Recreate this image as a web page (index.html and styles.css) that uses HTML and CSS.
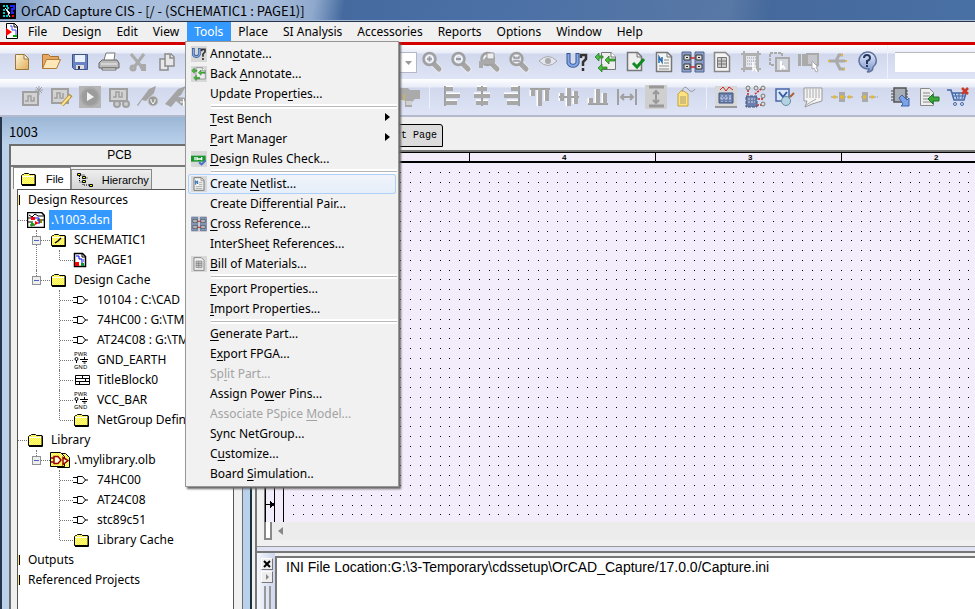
FILE: index.html
```html
<!DOCTYPE html>
<html lang="en">
<head>
  <meta charset="UTF-8" />
  <title>OrCAD Capture CIS</title>
  <meta name="viewport" content="width=device-width, initial-scale=1.0" />
  <link rel="stylesheet" href="styles.css">
</head>
<body>
  <!-- shared icons -->
  <svg class="sprite" width="0" height="0" aria-hidden="true">
    <pattern id="dither" width="2" height="2" patternUnits="userSpaceOnUse"><rect width="2" height="2" fill="#ffff9c"/><path d="M0 0h1v1H0zM1 1h1v1H1z" fill="#fff02a"/></pattern>
    <linearGradient id="blue" x2="0" y2="1"><stop stop-color="#e3ebfb"/><stop offset="1" stop-color="#7e98cc"/></linearGradient>
    <linearGradient id="paper" x2="1" y2="1"><stop stop-color="#fff5d8"/><stop offset="1" stop-color="#e0ad55"/></linearGradient>
    <symbol id="folder" viewBox="0 0 18 16"><path d="M1.500 13.500V4.500l1-1h1l1-1h4l1 1h5.500v10z" fill="url(#dither)" stroke="#000"/><path d="M2 5.500h12" stroke="#fff"/><path d="M15.500 4v10.500H2" fill="none" stroke="#000"/></symbol>
    <symbol id="gate" viewBox="0 0 18 16"><path d="M0 5.500h5M0 10.500h5M4.500 4.500h5l3 3.500-3 3.500h-5zM12 8h3" fill="none" stroke="#000"/></symbol>
    <symbol id="pwr" viewBox="0 0 18 18"><text x="1" y="5" font-size="6">PWR</text><path d="M3.500 9v3M7 8.500h8M11.500 6v2M9 10.500h5M10.500 12h2" fill="none" stroke="#000"/><circle cx="3.500" cy="8" r="1.500" fill="none" stroke="#000"/><text x="1" y="18" font-size="6">GND</text></symbol>
    <symbol id="page" viewBox="0 0 18 16"><path d="M1.500 1.500h8l3 3v10h-11z" fill="#fff" stroke="#000" stroke-width="1.500"/><path d="M9 1v4h4" fill="none" stroke="#000"/><path d="M3 4h3v3h3v4" fill="none" stroke="#00f"/><path d="M2 10h4v4H2z" fill="red"/><path d="M8 11h3v3H8z" fill="#093"/><path d="M9 7h2v3H9z" fill="#88f"/></symbol>
    <symbol id="zoom" viewBox="0 0 24 24"><path d="M13 13l6 6" stroke="#e8e8e8" stroke-width="7" stroke-linecap="round"/><path d="M13 13l6 6" stroke="#a5a5a5" stroke-width="5" stroke-linecap="round"/><circle cx="9.500" cy="9" r="6" fill="#d5daea" stroke="#a0a0a0" stroke-width="2.500"/><circle cx="9.500" cy="9" r="3.500" fill="none" stroke="#fff"/></symbol>
    <symbol id="annotate" viewBox="0 0 24 24"><path d="M3.500 3v10a5 5 0 0 0 9 0V3" fill="none" stroke="#36558f" stroke-width="4"/><path d="M3.500 4v9a5 5 0 0 0 9 0V4" fill="none" stroke="#83a9e8" stroke-width="2"/><path d="M16 8V5h5v4l-3 3v4M18 18v3" fill="none" stroke="#333" stroke-width="2.500"/></symbol>
    <symbol id="back" viewBox="0 0 24 24"><path d="M7.500 2.500h10l4 4v13h-14z" fill="#eee" stroke="#777"/><path d="M17 2v5h5" fill="#fff" stroke="#777"/><path d="M1 7l4-4v3h4v2H5v3zM11 10l4-4v3h6v2h-6v3zM4 18l4-4v3h5v2H8v3z" fill="#4dba3c" stroke="#18731a" stroke-width=".7"/></symbol>
    <symbol id="netlist" viewBox="0 0 24 24"><path d="M4.500 2.500h11l4 4v15h-15z" fill="#f4f4f4" stroke="#777" stroke-width="1.500"/><path d="M15 3v4h4" fill="none" stroke="#777"/><path d="M7 13V7l3 5V7" fill="none" stroke="#246bb0" stroke-width="1.500"/><path d="M12 10h5M12 13h5M7 16h10M7 19h10" stroke="#888"/></symbol>
    <symbol id="cross" viewBox="0 0 24 24"><path d="M1 2h9v20H1zM14 2h9v20h-9z" fill="#8b9fc9" stroke="#53658d"/><path d="M10 8h4M10 17h4" stroke="#d22" stroke-width="1.500"/><path d="M3 5h6v5H3zM15 5h6v5h-6zM3 14h6v5H3zM15 14h6v5h-6z" fill="#ddd" stroke="#333"/><path d="M5 7.500h2M17 7.500h2M5 16.500h2M17 16.500h2" stroke="#222"/></symbol>
    <symbol id="bom" viewBox="0 0 24 24"><path d="M4.500 2.500h11l4 4v15h-15z" fill="#f4f4f4" stroke="#888" stroke-width="1.500"/><path d="M7.500 7.500h9v10h-9zM7.500 11h9M7.500 14h9M11.500 8v9" fill="#ccc" stroke="#777"/></symbol>
  </svg>

  <header class="titlebar">
    <svg class="app-icon" width="16" height="16" viewBox="0 0 16 16"><path d="M0 0h16v16H0z"/><path d="M3 3h5v4H4v6h4" fill="none" stroke="#0cc" stroke-dasharray="2 1" stroke-width="2"/><path d="M5 5l5 5-2 1 2 3" fill="#fff" stroke="#fff"/><path d="M10 3h4v3h-2v4h2" fill="none" stroke="#22f" stroke-width="2"/><path d="M12 12h2v2h-2z" fill="red"/></svg>
    <h1>OrCAD Capture CIS - [/ - (SCHEMATIC1 : PAGE1)]</h1>
  </header>

  <nav class="menubar">
    <svg class="doc-icon" width="14" height="18" viewBox="0 0 14 18"><path d="M1.500 1.500h8l3 3v12h-11z" fill="#fff" stroke="#000"/><path d="M9 1v4h4" fill="none" stroke="#000"/><path d="M5 4h2v4h4v5" fill="none" stroke="#44f"/><path d="M1 6l6 4-6 4z" fill="red"/><path d="M8 14h4" stroke="#0a0" stroke-width="2"/></svg>
    <button>File</button><button>Design</button><button>Edit</button><button>View</button><button class="open">Tools</button><button>Place</button><button>SI Analysis</button><button>Accessories</button><button>Reports</button><button>Options</button><button>Window</button><button>Help</button>
  </nav>

  <div class="toolbar main-tools">
    <div class="group">
      <button aria-label="New"><svg viewBox="0 0 24 24"><path d="M5.500 4.500h9l4 4v11h-13z" fill="url(#paper)" stroke="#9b773b"/><path d="M14 5v4h4" fill="#fff" stroke="#9b773b"/></svg></button>
      <button aria-label="Open"><svg viewBox="0 0 24 24"><path d="M3.500 18.500v-14h6l2 2h8v4" fill="#e6a765" stroke="#a97132"/><path d="M3.500 18.500l4-9h14l-4 9z" fill="#ffe7b8" stroke="#b47b37"/></svg></button>
      <button aria-label="Save"><svg viewBox="0 0 24 24"><path d="M4.500 4.500h15v15h-13l-2-2z" fill="#6883c4" stroke="#405488"/><path d="M7 5h10v7H7z" fill="#e9effb"/><path d="M8 15h8v4H8z" fill="#ddd"/><path d="M10 16h2v3h-2z" fill="#334"/></svg></button>
      <button aria-label="Print"><svg viewBox="0 0 24 24"><path d="M7 10L9 3h9l-1 7" fill="#fff" stroke="#777"/><path d="M5 10h15l2 3v5H2v-5z" fill="#bbb" stroke="#666"/><path d="M4 14h16" stroke="#eee"/><path d="M5 18h14v2H5z" fill="#fff" stroke="#666"/></svg></button>
      <button aria-label="Cut"><svg viewBox="0 0 24 24" fill="none" stroke="#aaa"><path d="M5 4l10 12M18 4L9 16" stroke-width="3"/><circle cx="7" cy="18" r="2" stroke-width="3"/><path d="M14 15h5v5h-3z" fill="#aaa" stroke-width="2"/></svg></button>
      <button aria-label="Copy"><svg viewBox="0 0 24 24" fill="#e8e8ea" stroke="#8c8c8c" stroke-width="1.500"><path d="M5 9h8v11H5z"/><path d="M10 4h6l3 3v9h-9z"/><path d="M15 4v4h4"/></svg></button>
    </div>
    <div class="combo">
      <select aria-label="Place part"><option></option></select>
      <svg width="9" height="6" viewBox="0 0 9 6"><path d="M1 1h7L4.500 5z" fill="#999"/></svg>
    </div>
    <div class="group">
      <button aria-label="Zoom in"><svg viewBox="0 0 24 24"><use href="#zoom"/><path d="M7 9h5M9.500 6.500v5" stroke="#999" stroke-width="1.500"/></svg></button>
      <button aria-label="Zoom out"><svg viewBox="0 0 24 24"><use href="#zoom"/><path d="M7 9h5" stroke="#999" stroke-width="2"/></svg></button>
      <button aria-label="Zoom area"><svg viewBox="0 0 24 24"><use href="#zoom"/><path d="M1 11h4v7H1zM8 7h9v7H5v-4z" fill="#aaa"/><path d="M9 3h7v6H9z" fill="#eee" stroke="#999"/></svg></button>
      <button aria-label="Zoom all"><svg viewBox="0 0 24 24"><use href="#zoom"/><path d="M7 6v2h5V6M6 11h7" fill="none" stroke="#999" stroke-width="1.500"/></svg></button>
      <button aria-label="Fisheye"><svg viewBox="0 0 24 24"><path d="M3 11q9-9 18 0-9 9-18 0z" fill="#e3e6f0" stroke="#aaa"/><circle cx="12" cy="11" r="3" fill="#aaa"/></svg></button>
      <button aria-label="Annotate"><svg viewBox="0 0 24 24"><use href="#annotate"/></svg></button>
      <button aria-label="Back annotate"><svg viewBox="0 0 24 24"><use href="#back"/></svg></button>
      <button aria-label="Design rules check"><svg viewBox="0 0 24 24"><path d="M4.500 2.500h10l4 4v14h-14z" fill="#eee" stroke="#777" stroke-width="1.500"/><path d="M14 3v4h4" fill="none" stroke="#777"/><path d="M10 13l4 4 7-8" fill="none" stroke="#138a20" stroke-width="3"/></svg></button>
      <button aria-label="Create netlist"><svg viewBox="0 0 24 24"><use href="#netlist"/></svg></button>
      <button aria-label="Cross reference"><svg viewBox="0 0 24 24"><use href="#cross"/></svg></button>
      <button aria-label="Bill of materials"><svg viewBox="0 0 24 24"><use href="#bom"/></svg></button>
      <button aria-label="Snap to grid"><svg viewBox="0 0 24 24" fill="none" stroke="#b0b0b0" stroke-width="2"><path d="M6 5h12v13H6z" fill="#e4e7f0"/><path d="M5 1v21M19 1v21M2 4h20M2 19h20"/><path d="M8 8h9M8 11h9M8 14h9" stroke="#999" stroke-width="1" stroke-dasharray="1 1"/><path d="M14 12v8l2-2 2 4" stroke="#fff" stroke-width="1.500"/></svg></button>
      <button aria-label="Area select"><svg viewBox="0 0 24 24" fill="none" stroke="#aaa" stroke-width="2"><path d="M2 3h12v12H2z" stroke-dasharray="3 1"/><path d="M8 8h13v13H8z" fill="#d3d6df"/><path d="M13 11v7l2-2 2 3" stroke="#fff" fill="#aaa"/></svg></button>
      <button aria-label="Drag connected"><svg viewBox="0 0 24 24"><path d="M1 4h3v12H1zM5 4h5v12H5z" fill="#aaa"/><path d="M10 4h11v11H10z" fill="#c4c6cb" stroke="#aaa" stroke-width="2"/><path d="M15 11v8l2-1 2 4 2-1-2-4h2z" fill="#fff" stroke="#aaa"/></svg></button>
      <button aria-label="Hierarchy"><svg viewBox="0 0 24 24" fill="none" stroke="#aaa" stroke-width="3"><path d="M3 11h7l3-6h4M10 11h9M10 11l4 8h5"/><path d="M2 11h2M15 5h2M19 11h2M17 19h2" stroke="#e1b63d" stroke-width="2"/></svg></button>
      <button aria-label="Help"><svg viewBox="0 0 24 24"><path d="M12 2a9 8.500 0 1 0 2 17q0 2-2 3 6 0 6-5A9 8.500 0 0 0 12 2z" fill="url(#blue)" stroke="#60749e" stroke-width="1.500"/><path d="M9 8q0-3 3-3t3 3q0 2-3 3v3M12 15v2" fill="none" stroke="#26355e" stroke-width="2"/></svg></button>
    </div>
    <div class="search-box"><input type="text" aria-label="Search"></div>
  </div>

  <div class="toolbar sim-tools">
    <div class="group">
      <button aria-label="New profile"><svg viewBox="0 0 24 24" fill="none" stroke="#a0a0a0" stroke-width="1.500"><path d="M3 7h15v13H3z" fill="#d2d2d2" stroke-width="2"/><path d="M5 16h3v-5h3v5h3v-4"/><path d="M19 1v9M15 5h8M16 2l6 6M22 2l-6 6" stroke-width="1"/></svg></button>
      <button aria-label="Edit profile"><svg viewBox="0 0 24 24" fill="none" stroke="#a0a0a0" stroke-width="1.500"><path d="M3 4h16v14H3z" fill="#d2d2d2" stroke-width="2"/><path d="M5 13h3V8h3v5h3V8"/><path d="M13 20l9-10" stroke="#b39242" stroke-width="4"/><path d="M13 20l8-9" stroke="#ffe48c" stroke-width="2"/></svg></button>
      <button aria-label="Run"><svg viewBox="0 0 24 24"><path d="M1 1h22v22H1z" fill="#b5b5b5"/><circle cx="12" cy="12" r="9" fill="#9c9c9c" stroke="#a8a8a8" stroke-width="2"/><path d="M9 7l7 5-7 4z" fill="#f3f3f3"/></svg></button>
      <button aria-label="View results"><svg viewBox="0 0 24 24" fill="none" stroke="#a0a0a0" stroke-width="2"><path d="M3 4h17v12H3z" fill="#d2d2d2"/><path d="M6 12h3V7h3v5h3V7" stroke-width="1.500"/><circle cx="10" cy="19" r="3" fill="#ccc"/><circle cx="19" cy="19" r="3" fill="#ccc"/></svg></button>
      <button aria-label="Voltage marker"><svg viewBox="0 0 24 24"><path d="M1 20L13 4l7-3-2 7-8 8-4-1-4 6z" fill="#a4a4a4"/><circle cx="17" cy="16" r="5" fill="#999" stroke="#ccc"/><path d="M15 14v2l2 3 2-3v-2" fill="none" stroke="#fff"/></svg></button>
      <button aria-label="Current marker"><svg viewBox="0 0 24 24"><path d="M0 19L13 4l8-3-5 9-3 2 10 1-6 8-6-5-5 6z" fill="#a4a4a4"/><path d="M15 17h7M18.500 14v7" stroke="#fff"/></svg></button>
    </div>
    <div class="group probe">
      <button aria-label="Probe"><svg viewBox="0 0 24 24"><path d="M1 3h8l2 2h10v9h-5l-3 3v5H6v-7H1z" fill="#aaa"/><path d="M7 16h6v4H7z" fill="#d0d0d0"/><path d="M5 9v7" stroke="#e1b63d"/></svg></button>
    </div>
    <div class="group align">
      <button aria-label="Align left"><svg viewBox="0 0 24 24"><path d="M4 3h8M4 10h15M4 17h12" stroke="#fff" stroke-width="5"/><path d="M4 1v20" stroke="#a0a0a0" stroke-width="2"/><path d="M4 4h8M4 11h15M4 18h12" stroke="#a8a8a8" stroke-width="4"/></svg></button>
      <button aria-label="Align center"><svg viewBox="0 0 24 24"><path d="M7 3h10M4 10h16M6 17h12" stroke="#fff" stroke-width="5"/><path d="M12 1v20" stroke="#a0a0a0" stroke-width="2"/><path d="M7 4h10M4 11h16M6 18h12" stroke="#a8a8a8" stroke-width="4"/></svg></button>
      <button aria-label="Align right"><svg viewBox="0 0 24 24"><path d="M12 3h8M5 10h15M8 17h12" stroke="#fff" stroke-width="5"/><path d="M20 1v20" stroke="#a0a0a0" stroke-width="2"/><path d="M12 4h8M5 11h15M8 18h12" stroke="#a8a8a8" stroke-width="4"/></svg></button>
      <button aria-label="Align top"><svg viewBox="0 0 24 24"><path d="M4 4v7M11 4v17M18 4v12" stroke="#fff" stroke-width="5"/><path d="M2 4h20" stroke="#a0a0a0" stroke-width="2"/><path d="M5 4v7M12 4v17M19 4v12" stroke="#a8a8a8" stroke-width="4"/></svg></button>
      <button aria-label="Align middle"><svg viewBox="0 0 24 24"><path d="M4 8v8M11 3v18M18 6v13" stroke="#fff" stroke-width="5"/><path d="M2 12h20" stroke="#a0a0a0" stroke-width="2"/><path d="M5 8v8M12 3v18M19 6v13" stroke="#a8a8a8" stroke-width="4"/></svg></button>
      <button aria-label="Align bottom"><svg viewBox="0 0 24 24"><path d="M4 13v6M11 4v15M18 8v11" stroke="#fff" stroke-width="5"/><path d="M2 19h20" stroke="#a0a0a0" stroke-width="2"/><path d="M5 13v6M12 4v15M19 8v11" stroke="#a8a8a8" stroke-width="4"/></svg></button>
      <button aria-label="Distribute horizontally"><svg viewBox="0 0 24 24" fill="none" stroke="#a0a0a0" stroke-width="2"><path d="M3 4v16M21 4v16M6 12h12M9 9l-3 3 3 3M15 9l3 3-3 3"/></svg></button>
      <button aria-label="Distribute vertically"><svg viewBox="0 0 24 24" fill="none" stroke="#999" stroke-width="2"><path d="M1 0h22v24H1z" fill="#cfcfcf" stroke="none"/><path d="M5 2h15M5 21h15" stroke-width="3"/><path d="M12 6v12M9 9l3-3 3 3M9 15l3 3 3-3"/></svg></button>
      <button aria-label="Tag"><svg viewBox="0 0 24 24"><path d="M5 21V9l4-4 6 4v12z" fill="#ffe37f" stroke="#c3a13b"/><path d="M8 11v8M10 11v8M12 11v8" stroke="#a99c75"/><path d="M9 7q2-8 6-3t7 0" fill="none" stroke="#999"/></svg></button>
    </div>
    <div class="group more">
      <button aria-label="Constraint"><svg viewBox="0 0 24 24"><path d="M1 1h22v21H1z" fill="#d8d8d8"/><path d="M1 22h22" stroke="#555"/><path d="M5 8h14v10H5z" fill="#6b80ad" stroke="#41547b"/><path d="M8 10v7M12 10v7M16 10v7M6 13h12" stroke="#ccd7f3" stroke-dasharray="2 1"/><path d="M6 5l3-3 3 4 3-4 4 3" fill="none" stroke="#c22"/></svg></button>
      <button aria-label="Pin map"><svg viewBox="0 0 24 24"><path d="M3 11h11v11H3z" fill="#6b80ad" stroke="#41547b" stroke-dasharray="3 1"/><path d="M5 14h7M5 17h7" stroke="#ddd" stroke-dasharray="2 1"/><path d="M5 10V5M12 9l6-5M15 14h5M14 20h7" stroke="#c22" stroke-width="1.500" stroke-dasharray="2 1"/><g fill="#ddd" stroke="#777"><circle cx="5" cy="3" r="2"/><circle cx="13" cy="3" r="2"/><circle cx="20" cy="3" r="2"/><circle cx="20" cy="11" r="2"/><circle cx="20" cy="19" r="2"/></g></svg></button>
      <button aria-label="Waveform"><svg viewBox="0 0 24 24"><path d="M4 4h13v12H4z" fill="#dbe5f8" stroke="#4767a8" stroke-width="1.500"/><path d="M7 7l4 5 4-5" fill="none" stroke="#345ca5" stroke-width="2"/><circle cx="14" cy="16" r="4.500" fill="#b3d3e2" stroke="#628ca0"/><path d="M18 12l4-4" stroke="#a9622f" stroke-width="2"/></svg></button>
      <button aria-label="Ruler"><svg viewBox="0 0 24 24"><path d="M3 3h18v13l-10 3-7 3 2-6H3z" fill="#f4f4f4" stroke="#999"/><path d="M6 4v9M9 4v9M12 4v9M15 4v9M18 4v9M5 20l10-6" stroke="#aaa"/></svg></button>
      <button aria-label="Net group"><svg viewBox="0 0 24 24"><path d="M1 12h22" stroke="#999" stroke-dasharray="3 1"/><path d="M9 7h6v10H9z" fill="#aaa"/><path d="M10 12h4M3 12h3M18 12h3" stroke="#e5b92c" stroke-width="3"/></svg></button>
      <button aria-label="Net alias"><svg viewBox="0 0 24 24"><path d="M2 12h17" stroke="#999" stroke-dasharray="3 1"/><path d="M3 7h6v10H3z" fill="#aaa"/><path d="M4 12h3M12 12h3" stroke="#e5b92c" stroke-width="3"/></svg></button>
      <button aria-label="Part"><svg viewBox="0 0 24 24"><path d="M3 6h17M3 9h17M3 12h17M3 15h17" stroke="#444"/><path d="M6 3h12v14H6z" fill="#a7adb4" stroke="#555" stroke-width="1.500"/><path d="M11 13l3-3 5 5 2-2v8h-8l2-2z" fill="#7da3e6" stroke="#3c62ae"/></svg></button>
      <button aria-label="Import"><svg viewBox="0 0 24 24"><path d="M3.500 3.500h9l4 4v13h-13z" fill="#eee" stroke="#888"/><path d="M6 8h7M6 11h7M6 14h5M6 17h8" stroke="#888"/><path d="M11 14l5-5v3h6v4h-6v3z" fill="#3da73c" stroke="#197522"/></svg></button>
      <button aria-label="Cart"><svg viewBox="0 0 24 24"><path d="M1 5h4l3 10h10l2-7H6" fill="#b9cdee" stroke="#4668a5" stroke-width="1.500"/><path d="M9 8l2 6M13 8v6M17 8l-1 6M7 11h12" stroke="#4668a5"/><circle cx="9" cy="19" r="1.500" fill="none" stroke="#4668a5"/><circle cx="16" cy="19" r="1.500" fill="none" stroke="#4668a5"/><path d="M16 3l6 6M22 3l-6 6" stroke="#c93a27" stroke-width="2.500"/></svg></button>
    </div>
  </div>

  <main>
    <section class="project">
      <h2>1003</h2>
      <div class="project-box">
        <div class="pcb">PCB</div>
        <div class="tabs">
          <button class="active"><svg width="18" height="16"><use href="#folder"/></svg>File</button>
          <button><svg width="18" height="16" viewBox="0 0 18 16"><path d="M3.500 4v6h4M3.500 3h5v3h3M7 10v3h7" fill="none" stroke="#000" stroke-dasharray="1 1"/><path d="M1.500 1.500h3v2h-3zM6.500 4.500h3v2h-3zM6.500 8.500h3v2h-3zM13.500 12.500h3v2h-3z" fill="#ff0" stroke="#000"/></svg>Hierarchy</button>
        </div>
        <div class="tree">
          <div class="root">Design Resources</div>
          <ul>
            <li><div class="row"><svg viewBox="0 0 18 16"><path d="M.5.500h14l3 3v12H.500z" fill="#fff" stroke="#000" stroke-width="1.500"/><path d="M0 6h5M0 10h6M11 4h6M10 8h7M3 13h5M2 3l3 2 3-3 3 2" fill="none" stroke="#000"/><path d="M4 5h4v3H4zM8 9l4 2-4 2z" fill="red"/><path d="M4 10l4 2-4 3z" fill="#0a0"/><path d="M12 7h3v4h-3z" fill="#880"/><path d="M8 6h4v6" fill="none" stroke="#00f"/></svg><span class="selected">.\1003.dsn</span></div>
              <ul>
                <li><div class="row"><i class="toggle"></i><svg viewBox="0 0 18 16"><use href="#folder"/><path d="M5 11l3-2 3-3" fill="none" stroke="#000" stroke-width="1.500"/></svg><span>SCHEMATIC1</span></div>
                  <ul><li><div class="row"><svg><use href="#page"/></svg><span>PAGE1</span></div></li></ul>
                </li>
                <li><div class="row"><i class="toggle"></i><svg><use href="#folder"/></svg><span>Design Cache</span></div>
                  <ul>
                    <li><div class="row"><svg><use href="#gate"/></svg><span>10104 : C:\CAD</span></div></li>
                    <li><div class="row"><svg><use href="#gate"/></svg><span>74HC00 : G:\TMP</span></div></li>
                    <li><div class="row"><svg><use href="#gate"/></svg><span>AT24C08 : G:\TM</span></div></li>
                    <li><div class="row"><svg class="tall"><use href="#pwr"/></svg><span>GND_EARTH</span></div></li>
                    <li><div class="row"><svg viewBox="0 0 18 16"><path d="M2.500 3.500h14v9h-14zM2 6.500h15M2 9.500h15M9.500 3v4M6.500 9v4M12.500 6v4" fill="#fff" stroke="#000"/></svg><span>TitleBlock0</span></div></li>
                    <li><div class="row"><svg class="tall"><use href="#pwr"/></svg><span>VCC_BAR</span></div></li>
                    <li><div class="row"><svg><use href="#folder"/></svg><span>NetGroup Defin</span></div></li>
                  </ul>
                </li>
              </ul>
            </li>
            <li><div class="row"><svg><use href="#folder"/></svg><span>Library</span></div>
              <ul>
                <li><div class="row"><i class="toggle"></i><svg class="wide" viewBox="0 0 20 16"><path d="M7.500 1.500h8l4 4v10h-12z" fill="url(#dither)" stroke="#000"/><path d="M.5.500h10l4 4v10H.500z" fill="url(#dither)" stroke="#000"/><path d="M1 6h3M1 10h3M4 4.500h4l3 3.500-3 3.500H4zM13 5.500l5 3-5 4z" fill="#ffd" stroke="#900" stroke-width="1.500"/></svg><span>.\mylibrary.olb</span></div>
                  <ul>
                    <li><div class="row"><svg><use href="#gate"/></svg><span>74HC00</span></div></li>
                    <li><div class="row"><svg><use href="#gate"/></svg><span>AT24C08</span></div></li>
                    <li><div class="row"><svg><use href="#gate"/></svg><span>stc89c51</span></div></li>
                    <li><div class="row"><svg><use href="#folder"/></svg><span>Library Cache</span></div></li>
                  </ul>
                </li>
              </ul>
            </li>
          </ul>
          <div class="root">Outputs</div>
          <div class="root">Referenced Projects</div>
        </div>
      </div>
    </section>

    <div class="workspace">
      <section class="editor">
        <div class="doc-tabs"><button>Start Page</button></div>
        <div class="sheet"><svg id="sheet" width="100%" height="100%"></svg></div>
        <div class="scroll"><i class="thumb"></i><svg width="6" height="8" viewBox="0 0 6 8"><path d="M5 0v8L0 4z" fill="#888"/></svg></div>
      </section>
      <section class="session">
        <div class="grip">
          <button aria-label="Close"><svg width="8" height="8" viewBox="0 0 8 8"><path d="M1 1l6 6M7 1L1 7" stroke="#000" stroke-width="2"/></svg></button>
          <button aria-label="Expand"><svg width="8" height="8" viewBox="0 0 8 8"><path d="M3 1v6l3-3z" fill="#888"/></svg></button>
          <i></i>
        </div>
        <div class="log">INI File Location:G:\3-Temporary\cdssetup\OrCAD_Capture/17.0.0/Capture.ini</div>
      </section>
    </div>
  </main>

  <div class="menu" role="menu">
    <button><svg class="boxed"><use href="#annotate"/></svg>Ann<u>o</u>tate...</button>
    <button><svg class="boxed"><use href="#back"/></svg>Back <u>A</u>nnotate...</button>
    <button>Update Prope<u>r</u>ties...</button>
    <hr>
    <button class="sub"><u>T</u>est Bench</button>
    <button class="sub"><u>P</u>art Manager</button>
    <button><svg class="boxed" viewBox="0 0 24 24"><path d="M0 7h22v9H0z" fill="#18952b"/><path d="M6 9v5M9 9v5M10 12h5M16 9v5" stroke="#fff" stroke-width="2"/><path d="M12 17l4 3 6-6" fill="none" stroke="#4873c8" stroke-width="3"/></svg><u>D</u>esign Rules Check...</button>
    <hr>
    <button class="hot"><svg class="boxed"><use href="#netlist"/></svg>Create <u>N</u>etlist...</button>
    <button>Create Di<u>f</u>ferential Pair...</button>
    <button><svg class="boxed"><use href="#cross"/></svg><u>C</u>ross Reference...</button>
    <button>InterShee<u>t</u> References...</button>
    <button><svg class="boxed"><use href="#bom"/></svg><u>B</u>ill of Materials...</button>
    <hr>
    <button><u>E</u>xport Properties...</button>
    <button><u>I</u>mport Properties...</button>
    <hr>
    <button><u>G</u>enerate Part...</button>
    <button>E<u>x</u>port FPGA...</button>
    <button disabled>Sp<u>l</u>it Part...</button>
    <button>Assign Po<u>w</u>er Pins...</button>
    <button disabled>Associate PSpice <u>M</u>odel...</button>
    <button>Sync NetGroup...</button>
    <button>C<u>u</u>stomize...</button>
    <button>Board <u>S</u>imulation..</button>
  </div>

  <script src="sheet.js"></script>
</body>
</html>
```
FILE: styles.css
```css
* {
  box-sizing: border-box;
}
body {
  margin: 0;
  height: 100vh;
  overflow: hidden;
  display: flex;
  flex-direction: column;
  position: relative;
  background: #f0f0f0;
  color: #000;
  font: 12px/20px "Noto Sans", sans-serif;
}
button {
  margin: 0;
  padding: 0;
  border: 0;
  background: none;
  color: inherit;
  font: inherit;
  white-space: nowrap;
}
.sprite {
  position: absolute;
}

/* title and menu bar */
.titlebar {
  flex: none;
  height: 22px;
  display: flex;
  align-items: center;
  gap: 5px;
  border-bottom: 1px solid #26354f;
  box-shadow: inset 0 -1px #a9bad3;
  background: linear-gradient(100deg, #7595c0 0, #a9bedb 60px, #a9bedb 260px, #8fa9cd 310px, #456a9f 340px, #4a70a6 480px, #5878a6 720px, #45699c 760px, #4970a4 100%);
}
.titlebar h1 {
  margin: 0;
  font: 13px/20px "Noto Sans CJK SC", sans-serif;
}
.menubar {
  flex: none;
  height: 20px;
  display: flex;
  align-items: stretch;
  padding-left: 5px;
  line-height: 18px;
}
.doc-icon {
  margin-right: 2px;
}
.menubar button {
  padding: 0 8px 0 7px;
}
.menubar .open {
  background: #3399ff;
  color: #fff;
}

/* toolbars */
.toolbar {
  flex: none;
  display: flex;
  align-items: center;
  background: linear-gradient(#fff 0, #e8ecf8 8px, #d1d8ed 9px, #dfe5f6 100%);
}
.main-tools {
  height: 37px;
  border-top: 3px solid #d40000;
  padding-left: 7px;
}
.sim-tools {
  height: 38px;
  border-bottom: 2px solid #b4b9cd;
  padding-left: 17px;
}
.group {
  display: flex;
  flex: none;
}
.group button {
  width: 29px;
  height: 24px;
  display: flex;
  justify-content: center;
}
.group svg {
  width: 24px;
  height: 24px;
}
.combo {
  flex: none;
  width: 178px;
  margin-left: 58px;
  height: 21px;
  position: relative;
}
.combo select {
  width: 100%;
  height: 100%;
  appearance: none;
  background: #fff;
  border: 1px solid #b5b8c4;
}
.combo svg {
  position: absolute;
  right: 4px;
  top: 8px;
}
.search-box {
  flex: 1;
  min-width: 0;
  align-self: stretch;
  display: flex;
  align-items: center;
  margin-left: 6px;
  padding-left: 7px;
  border-left: 1px solid #eef1fb;
}
.search-box input {
  width: 100%;
  height: 20px;
  padding: 0;
  border: 0;
  border-top: 1px solid #bbb;
  background: #fff;
}
.probe {
  margin-left: 205px;
}
.align {
  margin-left: 4px;
  padding-left: 8px;
  border-left: 1px solid #eef1fb;
}
.more {
  margin-left: 7px;
  padding-left: 4px;
  border-left: 1px solid #eef1fb;
}

/* project manager */
main {
  flex: 1;
  min-height: 0;
  display: flex;
}
.project {
  flex: none;
  width: 252px;
  display: flex;
  flex-direction: column;
  border-left: 2px solid #26354a;
  border-right: 2px solid #17313f;
  padding: 0 7px;
  background: linear-gradient(#9bb6d5, #bad1ec 27px);
}
.project h2 {
  margin: 0;
  height: 27px;
  font: 13px/30px "Noto Sans CJK SC", sans-serif;
}
.project-box {
  flex: 1;
  min-height: 0;
  display: flex;
  flex-direction: column;
  border: 2px solid #6e6e6e;
  border-right-width: 1px;
  border-bottom: 0;
  background: #f0f0f0;
}
.pcb {
  height: 21px;
  border-bottom: 2px solid #777;
  font: 12px/18px "Liberation Sans", sans-serif;
  text-align: center;
  padding-right: 14px;
}
.tabs {
  height: 22px;
  padding-left: 2px;
  display: flex;
  align-items: flex-end;
  font: 12px/20px "Liberation Sans", sans-serif;
}
.tabs button {
  height: 20px;
  padding: 0 2px 0 4px;
  display: flex;
  align-items: center;
  gap: 8px;
  border: 1px solid #888;
  border-bottom: 0;
  background: linear-gradient(#eee, #d5d5d5);
  font-size: 11px;
}
.tabs .active {
  height: 22px;
  padding: 0 6px;
  background: #fff;
}
.tree {
  flex: 1;
  min-height: 0;
  overflow: hidden;
  margin: 0 8px 0 6px;
  border: 1px solid #555;
  border-bottom: 0;
  background: #fff;
  white-space: nowrap;
}
.root {
  height: 20px;
  padding-left: 10px;
  background: linear-gradient(90deg, #fe6 1px, #000 1px) 0 5px / 2px 10px no-repeat;
}
.tree ul {
  list-style: none;
  margin: 0;
  padding: 0;
}
.tree ul ul {
  padding-left: 23px;
}
.tree li {
  position: relative;
}
.tree li::before {
  content: "";
  position: absolute;
  left: -5px;
  top: 0;
  bottom: 0;
  border-left: 1px dotted #777;
}
.tree li:last-child::before {
  bottom: auto;
  height: 10px;
}
.row {
  height: 20px;
  display: flex;
  align-items: center;
  position: relative;
}
.row::before {
  content: "";
  width: 9px;
  border-top: 1px dotted #777;
}
.tree li li li .row::before {
  width: 13px;
  margin-left: -4px;
}
.row svg {
  flex: none;
  width: 18px;
  height: 16px;
}
.row .tall {
  height: 18px;
}
.row .wide {
  width: 20px;
  margin-right: -2px;
}
.row svg text {
  font: bold 6px "Liberation Sans", sans-serif;
}
.row span {
  margin-left: 4px;
  padding: 0 2px;
}
.row .selected {
  background: #3399ff;
  color: #fff;
}
.toggle {
  position: absolute;
  left: -9px;
  top: 6px;
  width: 9px;
  height: 9px;
  border: 1px solid #919191;
  background: linear-gradient(#46c, #46c) center / 5px 1px no-repeat #eee;
}

/* schematic editor and session log */
.workspace {
  flex: 1;
  min-width: 0;
  display: flex;
  flex-direction: column;
  margin-left: 3px;
  border-left: 2px solid #777;
}
.editor {
  flex: 1;
  min-height: 0;
  display: flex;
  flex-direction: column;
  padding: 0 0 6px 7px;
}
.doc-tabs {
  height: 33px;
  padding: 7px 0 3px;
}
.doc-tabs button {
  width: 179px;
  height: 23px;
  padding-right: 5px;
  text-align: right;
  border: 1px solid #000;
  border-radius: 0 3px 0 0;
  background: #dcdcdc;
  font: 10px "Liberation Mono", monospace;
}
.sheet {
  flex: 1;
  min-height: 0;
  border-top: 2px solid #777;
  border-left: 1px solid #777;
  background: #f3ecfa;
}
.sheet svg {
  display: block;
}
.sheet text {
  font: bold 8px "Liberation Sans", sans-serif;
}
.scroll {
  height: 18px;
  display: flex;
  align-items: center;
  gap: 6px;
  background: #ececec;
}
.thumb {
  width: 8px;
  height: 18px;
  border: 2px solid #888;
  border-top: 0;
  background: #fff;
}
.session {
  flex: none;
  height: 63px;
  display: flex;
  border-top: 1px solid #999;
  box-shadow: inset 0 4px #dfe3f3, inset 0 6px #777;
  padding-top: 6px;
}
.grip {
  width: 18px;
  padding: 5px 0 0 4px;
  display: flex;
  flex-direction: column;
  gap: 1px;
  background: linear-gradient(90deg, #f4f6fc, #ced7ed);
}
.grip button {
  width: 12px;
  height: 12px;
  flex: none;
  display: flex;
  align-items: center;
  justify-content: center;
  border: 1px solid #777;
  border-top-color: #fff;
  border-left-color: #fff;
  background: #eee;
}
.grip i {
  flex: 1;
  width: 7px;
  margin: 2px 0 0 3px;
  border: 2px solid #999;
  border-width: 0 2px;
}
.log {
  flex: 1;
  margin-top: 3px;
  padding-left: 9px;
  border-top: 2px solid #777;
  border-left: 2px solid #777;
  background: #fff;
  font: 14px/18px "Liberation Sans", sans-serif;
}

/* open Tools menu */
.menu {
  position: absolute;
  left: 185px;
  top: 41px;
  width: 214px;
  padding: 2px;
  display: flex;
  flex-direction: column;
  border: 1px solid #979797;
  background: #f1f1f1;
  box-shadow: 2px 2px 2px #666;
}
.menu button {
  height: 20px;
  padding-left: 22px;
  display: flex;
  align-items: center;
  white-space: pre;
  position: relative;
}
.menu button:disabled {
  color: #a3a3a3;
}
.menu u {
  text-underline-offset: 2px;
}
.menu .boxed {
  width: 16px;
  height: 16px;
  margin: 0 3px 0 -19px;
  background: #d8d8d8;
}
.menu .hot {
  border-radius: 3px;
  background: linear-gradient(#f1f4f9, #e5eefa);
  box-shadow: inset 0 0 0 1px #aecff7;
}
.menu .sub::after {
  content: "";
  position: absolute;
  right: 6px;
  top: 4px;
  border: 4px solid transparent;
  border-left: 5px solid #000;
  border-right: 0;
}
.menu hr {
  width: 186px;
  height: 5px;
  margin: 0 0 0 23px;
  border: 0;
  background: linear-gradient(#fff 2px, #b8b8b8 2px, #b8b8b8 3px, #fff 3px);
}
```
FILE: sheet.js
```javascript
// draws the page border, zone numbers and snap grid
const sheet = document.getElementById('sheet');
const w = sheet.clientWidth;
const h = sheet.clientHeight;
const pitch = 9.79;
const zone = 186;

let dots = '';
for (let y = 20.3; y < h; y += pitch) {
  for (let x = 28.3; x < w; x += pitch) {
    dots += `M${Math.floor(x)} ${Math.floor(y)}h1v1h-1z`;
  }
}

let border = `M0 0h${w}v1H0zM9 9h${w}v2H9zM0 0h1v${h}H0zM9 9h1v${h}H9zM18 11h1v${h}h-1z`;
let labels = '';
for (let i = 0; i < 4; i++) {
  const x = 18 + i * zone;
  border += `M${x} 0h1v9h-1z`;
  labels += `<text x="${x + 93}" y="8">${5 - i}</text>`;
}
const arrowY = h - 18;
border += `M0 ${arrowY}h5v-3l5 3.500-5 3.500v-3H0z`;

sheet.innerHTML = `<path d="${dots}${border}" shape-rendering="crispEdges"/>${labels}`;
```
